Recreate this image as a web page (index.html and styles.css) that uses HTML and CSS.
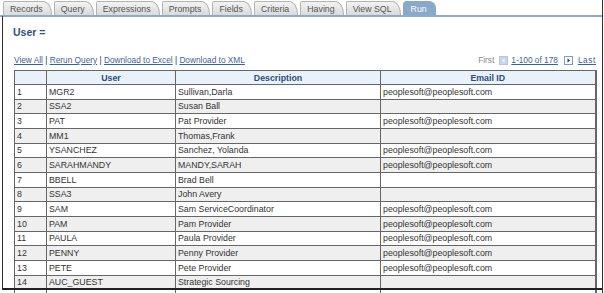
FILE: index.html
```html
<!DOCTYPE html>
<html lang="en">
<head>
<meta charset="utf-8">
<title>Query Run</title>
<link rel="stylesheet" href="styles.css">
</head>
<body>
<div class="page">
  <div class="tabs">
    <span class="tab">Records</span>
    <span class="tab">Query</span>
    <span class="tab">Expressions</span>
    <span class="tab">Prompts</span>
    <span class="tab">Fields</span>
    <span class="tab">Criteria</span>
    <span class="tab">Having</span>
    <span class="tab">View SQL</span>
    <span class="tab active">Run</span>
  </div>
  <div class="content">
    <div class="title">User =</div>
    <div class="toolbar">
      <div class="links">
        <a href="#">View All</a><span class="sep">|</span><a href="#">Rerun Query</a><span class="sep">|</span><a href="#">Download to Excel</a><span class="sep">|</span><a href="#">Download to XML</a>
      </div>
      <div class="pager">
        <span class="first">First</span>
        <svg class="nav prev" width="9" height="9" viewBox="0 0 9 9"><rect x="0.5" y="0.5" width="8" height="8" fill="#c7d7ea" stroke="#b4c6dc"/><path d="M5.5 2.2 L3 4.5 L5.5 6.8 Z" fill="#f4f7fb"/></svg>
        <a href="#" class="range">1-100 of 178</a>
        <svg class="nav next" width="9" height="9" viewBox="0 0 9 9"><rect x="0.5" y="0.5" width="8" height="8" fill="#ffffff" stroke="#7f9cc2"/><path d="M3.5 2.2 L6 4.5 L3.5 6.8 Z" fill="#1f3f73"/></svg>
        <a href="#" class="last">Last</a>
      </div>
    </div>
    <table class="grid">
      <colgroup><col class="c-num"><col class="c-user"><col class="c-desc"><col class="c-mail"></colgroup>
      <thead>
        <tr><th></th><th>User</th><th>Description</th><th>Email ID</th></tr>
      </thead>
      <tbody>
        <tr><td>1</td><td>MGR2</td><td>Sullivan,Darla</td><td>peoplesoft@peoplesoft.com</td></tr>
        <tr class="even"><td>2</td><td>SSA2</td><td>Susan Ball</td><td></td></tr>
        <tr><td>3</td><td>PAT</td><td>Pat Provider</td><td>peoplesoft@peoplesoft.com</td></tr>
        <tr class="even"><td>4</td><td>MM1</td><td>Thomas,Frank</td><td></td></tr>
        <tr><td>5</td><td>YSANCHEZ</td><td>Sanchez, Yolanda</td><td>peoplesoft@peoplesoft.com</td></tr>
        <tr class="even"><td>6</td><td>SARAHMANDY</td><td>MANDY,SARAH</td><td>peoplesoft@peoplesoft.com</td></tr>
        <tr><td>7</td><td>BBELL</td><td>Brad Bell</td><td></td></tr>
        <tr class="even"><td>8</td><td>SSA3</td><td>John Avery</td><td></td></tr>
        <tr><td>9</td><td>SAM</td><td>Sam ServiceCoordinator</td><td>peoplesoft@peoplesoft.com</td></tr>
        <tr class="even"><td>10</td><td>PAM</td><td>Pam Provider</td><td>peoplesoft@peoplesoft.com</td></tr>
        <tr><td>11</td><td>PAULA</td><td>Paula Provider</td><td>peoplesoft@peoplesoft.com</td></tr>
        <tr class="even"><td>12</td><td>PENNY</td><td>Penny Provider</td><td>peoplesoft@peoplesoft.com</td></tr>
        <tr><td>13</td><td>PETE</td><td>Pete Provider</td><td>peoplesoft@peoplesoft.com</td></tr>
        <tr class="even"><td>14</td><td>AUC_GUEST</td><td>Strategic Sourcing</td><td></td></tr>
        <tr><td></td><td></td><td></td><td></td></tr>
      </tbody>
    </table>
  </div>
  <div class="frame"></div>
</div>
</body>
</html>
```

FILE: styles.css
```css
html, body {
  margin: 0;
  padding: 0;
  background: #ffffff;
}

body {
  font-family: "Liberation Sans", Arial, sans-serif;
  color: #222222;
  width: 604px;
  height: 293px;
  overflow: hidden;
}

.page {
  position: relative;
  width: 604px;
  height: 293px;
  overflow: hidden;
}

/* Tabs */
.tabs {
  display: flex;
  gap: 2px;
  height: 14px;
  padding: 1px 0 0 3px;
  border-bottom: 2px solid #8eaac6;
  margin-right: 1px;
}

.tab {
  height: 14px;
  line-height: 14px;
  padding: 0 8px 0 6px;
  font-size: 8.8px;
  color: #555555;
  background: linear-gradient(#f3f3f3, #dadada);
  border: 1px solid #b3b3b3;
  border-bottom: none;
  border-radius: 2px 9px 0 0 / 2px 13px 0 0;
  box-sizing: border-box;
  white-space: nowrap;
}

.tab.active {
  background: #8aa8c8;
  border-color: #8aa8c8;
  color: #ffffff;
  border-radius: 4px 7px 0 0;
  padding: 0 8px 0 7px;
}

/* Content */
.content {
  margin: 0 9px 0 14px;
}

.title {
  margin-top: 9px;
  margin-left: -1px;
  height: 12px;
  line-height: 12px;
  font-size: 10.5px;
  font-weight: bold;
  color: #2d5283;
}

.toolbar {
  display: flex;
  justify-content: space-between;
  align-items: center;
  margin-top: 17px;
  margin-bottom: 5px;
  height: 10px;
  line-height: 10px;
  font-size: 8.3px;
}

.toolbar a {
  color: #3f5f99;
  text-decoration: underline;
}

.sep {
  color: #333333;
  margin: 0 2.3px;
}

.pager {
  display: flex;
  align-items: center;
  margin-right: -1px;
}

.first {
  color: #8a8a8a;
}

.nav {
  display: block;
}

.prev {
  margin: 0 3px 0 5px;
}

.next {
  margin: 0 5px 0 6px;
}

.last {
  letter-spacing: 0.6px;
}

/* Grid */
.grid {
  border-collapse: collapse;
  table-layout: fixed;
  width: 581px;
  border-right: 2px solid #666666;
}

.c-num { width: 32px; }
.c-user { width: 129px; }
.c-desc { width: 205px; }
.c-mail { width: 215px; }

.grid th,
.grid td {
  border: 1px solid #666666;
  padding: 0 2px;
  font-size: 8.8px;
  white-space: nowrap;
  overflow: hidden;
  vertical-align: middle;
}

.grid th {
  height: 13px;
  background: #e9f2fb;
  color: #2c4d80;
  font-weight: bold;
  text-align: center;
}

.grid td {
  height: 13.67px;
  color: #333333;
  background: #ffffff;
}

.grid tr.even td {
  background: #efefef;
}

/* Window frame lines drawn over the page */
.frame {
  position: absolute;
  left: 2px;
  top: 16px;
  width: 599px;
  height: 272px;
  border-left: 1px solid #333333;
  border-bottom: 2px solid #222222;
  pointer-events: none;
}

.frame::after {
  content: "";
  position: absolute;
  right: -1px;
  top: -16px;
  width: 1px;
  height: 293px;
  background: #333333;
}
```
